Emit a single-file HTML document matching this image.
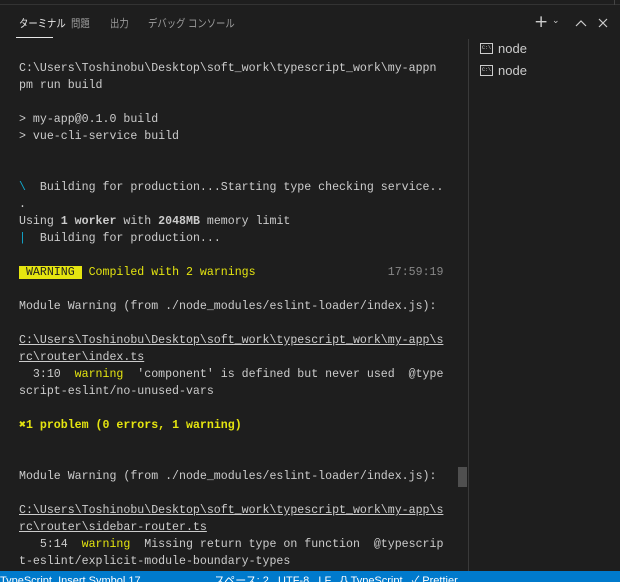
<html><head><style>
body{margin:0;width:620px;height:582px;background:#1e1e1e;overflow:hidden;position:relative;font-family:"Liberation Mono",monospace;}
.l{position:absolute;left:19px;font-size:11.6px;line-height:17px;color:#cccccc;white-space:pre;margin-top:1px}
.y{color:#e5e510}.b{font-weight:bold}.u{text-decoration:underline}
.tab{position:absolute;top:15px;font-family:"Liberation Sans","Noto Sans CJK JP",sans-serif;font-size:11px;color:#9d9d9d;transform-origin:0 0;transform:scaleX(0.85)}
</style></head><body>
<div style="position:absolute;left:0;top:4px;width:620px;height:1px;background:#333"></div>
<div style="position:absolute;left:614px;top:0;width:1px;height:5px;background:#444"></div>
<div class="tab" style="left:19px;color:#e7e7e7">ターミナル</div>
<div style="position:absolute;left:16px;top:37px;width:37px;height:1px;background:#e7e7e7"></div>
<div class="tab" style="left:71px">問題</div>
<div class="tab" style="left:110px">出力</div>
<div class="tab" style="left:148px">デバッグ コンソール</div>
<div style="position:absolute;left:534px;top:12px;color:#ccc;font-family:'DejaVu Sans';font-size:17px">+</div>
<div style="position:absolute;left:552px;top:16px;color:#ccc;font-family:'DejaVu Sans';font-size:9px">⌄</div>
<svg style="position:absolute;left:575px;top:17px" width="40" height="12"><path d="M1 9l5-5 5 5" stroke="#ccc" fill="none" stroke-width="1.2"/><path d="M24 2l8 8M32 2l-8 8" stroke="#ccc" stroke-width="1.2"/></svg>
<div style="position:absolute;left:468px;top:39px;width:1px;height:532px;background:#3a3a3a"></div>
<div style="position:absolute;left:480px;top:43px;width:13px;height:11px;border:1px solid #ccc;box-sizing:border-box;font-size:5px;color:#ccc;line-height:9px;text-align:center">C:\</div>
<div style="position:absolute;left:498px;top:41px;font-family:'Liberation Sans';font-size:13px;color:#ccc">node</div>
<div style="position:absolute;left:480px;top:65px;width:13px;height:11px;border:1px solid #ccc;box-sizing:border-box;font-size:5px;color:#ccc;line-height:9px;text-align:center">C:\</div>
<div style="position:absolute;left:498px;top:63px;font-family:'Liberation Sans';font-size:13px;color:#ccc">node</div>
<div style="position:absolute;left:458px;top:467px;width:9px;height:20px;background:#4f4f4f"></div>
<div class="l" style="top:59px">C:\Users\Toshinobu\Desktop\soft_work\typescript_work\my-appn</div>
<div class="l" style="top:76px">pm run build</div>
<div class="l" style="top:110px">&gt; my-app@0.1.0 build</div>
<div class="l" style="top:127px">&gt; vue-cli-service build</div>
<div class="l" style="top:178px"><span style="color:#11a8cd">\</span>  Building for production...Starting type checking service..</div>
<div class="l" style="top:195px">.</div>
<div class="l" style="top:212px">Using <b>1 worker</b> with <b>2048MB</b> memory limit</div>
<div class="l" style="top:229px"><span style="color:#11a8cd">|</span>  Building for production...</div>
<div class="l" style="top:263px"><span style="background:#e5e510;color:#1e1e1e"> WARNING </span> <span class="y">Compiled with 2 warnings</span>                   <span style="color:#888">17:59:19</span></div>
<div class="l" style="top:297px">Module Warning (from ./node_modules/eslint-loader/index.js):</div>
<div class="l u" style="top:331px">C:\Users\Toshinobu\Desktop\soft_work\typescript_work\my-app\s</div>
<div class="l u" style="top:348px">rc\router\index.ts</div>
<div class="l" style="top:365px">  3:10  <span class="y">warning</span>  'component' is defined but never used  @type</div>
<div class="l" style="top:382px">script-eslint/no-unused-vars</div>
<div class="l y b" style="top:416px">✖1 problem (0 errors, 1 warning)</div>
<div class="l" style="top:467px">Module Warning (from ./node_modules/eslint-loader/index.js):</div>
<div class="l u" style="top:501px">C:\Users\Toshinobu\Desktop\soft_work\typescript_work\my-app\s</div>
<div class="l u" style="top:518px">rc\router\sidebar-router.ts</div>
<div class="l" style="top:535px">   5:14  <span class="y">warning</span>  Missing return type on function  @typescrip</div>
<div class="l" style="top:552px">t-eslint/explicit-module-boundary-types</div>
<div style="position:absolute;left:0;top:571px;width:620px;height:11px;background:#007acc;color:#fff;font-family:'Liberation Sans','Noto Sans CJK JP',sans-serif;font-size:11px;line-height:20px;white-space:pre;overflow:hidden">TypeScript  Insert Symbol 17                        スペース: 2   UTF-8   LF   {} TypeScript   ✓ Prettier</div>
</body></html>
